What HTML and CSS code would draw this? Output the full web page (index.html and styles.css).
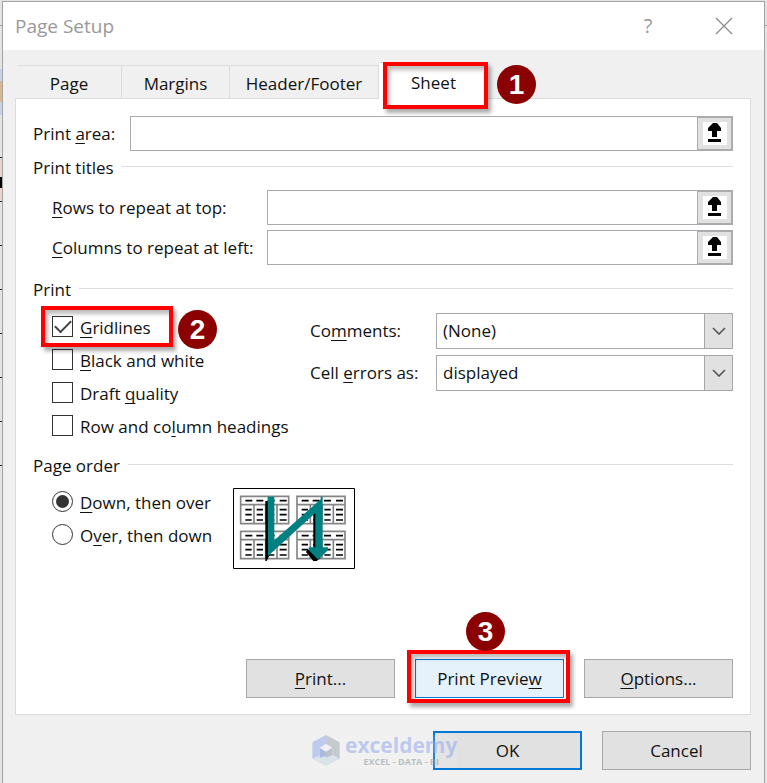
FILE: index.html
```html
<!DOCTYPE html>
<html lang="en">
<head>
<meta charset="utf-8">
<meta name="viewport" content="width=device-width, initial-scale=1">
<title>Page Setup</title>
<link rel="stylesheet" href="styles.css">
</head>
<body>
<svg class="defs" aria-hidden="true">
  <symbol id="collapse" viewBox="0 0 24 23">
    <path fill="#fff" d="M0 0h24v23H0z"/>
    <path d="M10 1h4l4 5v3h-4v6h-5V9H5V6zM5 17h13v3H5z"/>
  </symbol>
  <symbol id="chevron" viewBox="0 0 14 8">
    <path d="M1 1l6 6 6-6" fill="none" stroke="#555" stroke-width="1.6"/>
  </symbol>
</svg>
<main class="dialog">
  <header class="titlebar">
    <h1>Page Setup</h1>
    <button class="icon-button" type="button" aria-label="Help">?</button>
    <button class="icon-button" type="button" aria-label="Close">
      <svg width="18" height="18" viewBox="0 0 18 18" aria-hidden="true"><path d="M1 1l16 16M17 1L1 17" stroke="#8c8c8c" stroke-width="1.3"/></svg>
    </button>
  </header>

  <nav class="tabs" role="tablist">
    <button class="tab tab-page" type="button" role="tab">Page</button>
    <button class="tab" type="button" role="tab">Margins</button>
    <button class="tab tab-wide" type="button" role="tab">Header/Footer</button>
    <div class="active-wrap">
      <button class="tab tab-active" type="button" role="tab" aria-selected="true">Sheet</button>
      <span class="mark mark-tab"></span>
      <span class="badge badge-tab">1</span>
    </div>
  </nav>

  <form class="panel">
    <div class="field-row area-row">
      <label for="area">Print <u>a</u>rea:</label>
      <div class="ref-field"><input id="area" type="text"><button type="button" aria-label="Select print area"><svg aria-hidden="true"><use href="#collapse"/></svg></button></div>
    </div>

    <fieldset>
      <legend>Print titles</legend>
      <div class="titles">
        <div class="field-row title-row">
          <label for="rows"><u>R</u>ows to repeat at top:</label>
          <div class="ref-field"><input id="rows" type="text"><button type="button" aria-label="Select rows"><svg aria-hidden="true"><use href="#collapse"/></svg></button></div>
        </div>
        <div class="field-row title-row">
          <label for="cols"><u>C</u>olumns to repeat at left:</label>
          <div class="ref-field"><input id="cols" type="text"><button type="button" aria-label="Select columns"><svg aria-hidden="true"><use href="#collapse"/></svg></button></div>
        </div>
      </div>
    </fieldset>

    <fieldset class="print">
      <legend>Print</legend>
      <div class="print-body">
        <div class="choices">
          <div class="choice marked">
            <input id="grid" type="checkbox" checked><label for="grid"><u>G</u>ridlines</label>
            <span class="mark mark-grid"></span>
            <span class="badge badge-grid">2</span>
          </div>
          <div class="choice"><input id="bw" type="checkbox"><label for="bw"><u>B</u>lack and white</label></div>
          <div class="choice"><input id="draft" type="checkbox"><label for="draft">Draft <u>q</u>uality</label></div>
          <div class="choice"><input id="heads" type="checkbox"><label for="heads">Row and co<u>l</u>umn headings</label></div>
        </div>
        <div class="selects">
          <label for="comments">Co<u>m</u>ments:</label>
          <div class="select"><select id="comments"><option>(None)</option></select><span class="arrow"><svg width="14" height="8" aria-hidden="true"><use href="#chevron"/></svg></span></div>
          <label for="errors">Cell <u>e</u>rrors as:</label>
          <div class="select"><select id="errors"><option>displayed</option></select><span class="arrow"><svg width="14" height="8" aria-hidden="true"><use href="#chevron"/></svg></span></div>
        </div>
      </div>
    </fieldset>

    <fieldset class="order">
      <legend>Page order</legend>
      <div class="order-body">
        <div class="choices">
          <div class="choice"><input id="down" name="order" type="radio" checked><label for="down"><u>D</u>own, then over</label></div>
          <div class="choice"><input id="over" name="order" type="radio"><label for="over">O<u>v</u>er, then down</label></div>
        </div>
        <svg class="preview" width="122" height="81" viewBox="22 24 366 243" aria-hidden="true">
          <defs>
            <g id="sheet">
              <path d="M2 2h144v82H2zM2 27h144M42 27v57M77 27v57M111 27v57" fill="#fff" stroke="#858585" stroke-width="5"/>
              <path d="M16 15h21M49 15h21M83 15h21M119 15h21M16 42h19M50 42h19M84 42h19M119 42h21M16 57h19M50 57h19M84 57h19M119 57h21M16 73h19M50 73h19M84 73h19M119 73h21" stroke="#000" stroke-width="5"/>
            </g>
          </defs>
          <path d="M23.500 25.500h363v240h-363z" fill="#fff" stroke="#000" stroke-width="3"/>
          <use href="#sheet" x="43" y="47"/><use href="#sheet" x="212" y="47"/>
          <use href="#sheet" x="43" y="152"/><use href="#sheet" x="212" y="152"/>
          <path d="M119 63h12v164l-8 16h-4zM263 92h12v122l10 20-12 9h-10l-22-27 4-7h10l8 8z"/>
          <path d="M126 50h20v131L285 58V50h6v152h16v8l-14 14-16 15-14-15-14-14v-8h20V99L137 219l-10 10z" fill="#008080"/>
        </svg>
      </div>
    </fieldset>

    <div class="actions">
      <button class="push" type="button"><span><u>P</u>rint...</span></button>
      <div class="marked">
        <button class="push hot" type="button"><span>Print Previe<u>w</u></span></button>
        <span class="mark mark-preview"></span>
        <span class="badge badge-preview">3</span>
      </div>
      <button class="push" type="button"><span><u>O</u>ptions...</span></button>
    </div>
  </form>

  <footer class="footer">
    <div class="marked">
      <button class="push default" type="button">OK</button>
      <div class="brand">
        <svg width="28" height="31" viewBox="0 0 82 93" aria-hidden="true">
          <path fill="#9db1ec" d="M41 0v26L22 38v24L0 72V22z"/>
          <path fill="#a9b1ba" d="M41 0l41 22v50L60 60V38L41 26z"/>
          <path fill="#c9dde5" d="M0 72l22-10 19-10 19 8 22 12-41 21z"/>
          <path fill="#8099d8" d="M22 38l19 12v14L22 68z"/>
          <path fill="#9aa5b0" d="M41 50l19-12v22l-19 8z"/>
        </svg>
        <div><strong>exceldemy</strong><small>EXCEL - DATA - BI</small></div>
      </div>
    </div>
    <button class="push" type="button">Cancel</button>
  </footer>
</main>
</body>
</html>
```
FILE: styles.css
```css
* { box-sizing: border-box; }

body {
  margin: 0;
  padding: 1px 2px 0;
  color: #111;
  font: 17px/24px "Open Sans", "Noto Sans", sans-serif;
  background:
    linear-gradient(#000, #000) 0 177px / 2px 11px no-repeat,
    linear-gradient(#e8d5c9, #e8d5c9) 0 158px / 2px 42px no-repeat,
    linear-gradient(#d9b78f, #d9b78f) 0 81px / 2px 21px no-repeat,
    linear-gradient(#c5d4e6, #c5d4e6) 0 69px / 2px 46px no-repeat,
    linear-gradient(#999, #999) 0 25px / 100% 1px no-repeat,
    repeating-linear-gradient(#222 0 1px, transparent 1px 44px) 0 157px / 2px 309px no-repeat,
    #e4e4e4;
}

button, input, select { font: inherit; color: inherit; margin: 0; }
button { padding: 0; }
u { text-underline-offset: 3px; text-decoration-thickness: 1px; text-decoration-skip-ink: none; }

.defs { position: absolute; width: 0; height: 0; }

.dialog {
  min-height: calc(100vh - 1px);
  border: 1px solid #a3a3a3;
  border-bottom: 0;
  background: #f0f0f0;
}

.titlebar {
  display: flex;
  align-items: center;
  height: 48px;
  padding: 0 16px 0 12px;
  background: #fff;
  color: #999;
}
.titlebar h1 { flex: 1; margin: 0; font-size: 19px; font-weight: 400; }
.icon-button {
  display: grid;
  place-items: center;
  width: 48px;
  height: 32px;
  margin-left: 28px;
  border: 0;
  background: none;
  font-size: 20px;
}

.tabs { display: flex; align-items: flex-end; height: 48px; padding-left: 14px; }
.tab {
  width: 108px;
  height: 33px;
  padding-top: 4px;
  border: 1px solid #dcdcdc;
  border-width: 1px 1px 0 0;
  background: #f0f0f0;
}
.tab-page { width: 105px; }
.tab-wide { width: 149px; }
.active-wrap { position: relative; margin-bottom: -1px; }
.tab-active {
  width: 109px;
  height: 37px;
  padding: 4px 0 0;
  border-right: 0;
  background: #fff;
}

.mark {
  position: absolute;
  border: 4px solid #f00;
  box-shadow: 3px 4px 4px #0005, inset 3px 4px 4px #0004;
  pointer-events: none;
}
.mark-tab { left: 4px; top: 0; width: 105px; height: 47px; }
.mark-grid { left: -11px; top: -4px; width: 132px; height: 41px; }
.mark-preview { left: -8px; top: -9px; width: 163px; height: 53px; }

.badge {
  position: absolute;
  display: grid;
  place-items: center;
  width: 39px;
  height: 39px;
  border-radius: 50%;
  background: #8b0000;
  color: #fff;
  font: bold 28px/36px "Liberation Sans", sans-serif;
}
.badge-tab { left: 118px; top: 3px; }
.badge-grid { left: 126px; top: 0; }
.badge-preview { left: 51px; top: -47px; }

.panel {
  margin: 0 13px 0 12px;
  padding: 17px 17px 16px;
  border: 1px solid #dcdcdc;
  background: #fff;
}

.field-row { display: flex; align-items: center; height: 35px; }
.area-row label { width: 97px; }
.title-row label { width: 215px; }
.ref-field {
  display: flex;
  flex: 1;
  align-self: stretch;
  border: 1px solid #a9a9ae;
}
.ref-field input { flex: 1; min-width: 0; border: 0; padding: 0 6px; background: #fff; }
.ref-field button {
  display: grid;
  place-items: center;
  width: 35px;
  border: 1px solid #acacac;
  background: #e1e1e1;
}
.ref-field svg { width: 24px; height: 23px; }

fieldset { min-width: 0; margin: 5px 0 0; padding: 0; border: 0; }
legend { display: flex; align-items: center; gap: 8px; width: 100%; padding: 0; }
legend::after { content: ""; flex: 1; height: 1px; margin-bottom: 4px; background: #dcdcdc; }

.titles { display: grid; gap: 5px; padding: 10px 0 0 19px; }
.print { margin-top: 13px; }
.order { margin-top: 12px; }
.print-body { display: flex; padding: 8px 0 0 19px; }
.print-body .choices { width: 258px; }
.order-body { display: flex; align-items: flex-start; padding: 7px 0 0 19px; }
.order-body .choices { width: 181px; }
.preview { margin-top: 3px; }

.choice { display: flex; align-items: center; gap: 7px; height: 33px; white-space: nowrap; }
.choice label { padding-top: 3px; }
.choice input {
  display: grid;
  place-items: center;
  width: 21px;
  height: 21px;
  appearance: none;
  border: 1px solid #333;
  background: #fff;
}
.choice input[type="radio"] { border-radius: 50%; }
.choice input[type="radio"]:checked::after {
  content: "";
  width: 13px;
  height: 13px;
  border-radius: 50%;
  background: #333;
}
.choice input[type="checkbox"]:checked::after {
  content: "";
  width: 14px;
  height: 7px;
  margin-bottom: 5px;
  border: solid #444;
  border-width: 0 0 2px 2px;
  transform: rotate(-45deg);
}
.marked { position: relative; }

.selects {
  display: grid;
  grid-template-columns: 126px 1fr;
  gap: 6px 0;
  flex: 1;
  align-content: start;
  align-items: center;
  padding-top: 3px;
}
.select { position: relative; height: 36px; }
.select select {
  width: 100%;
  height: 100%;
  padding: 0 36px 0 6px;
  appearance: none;
  border: 1px solid #a9a9ae;
  border-radius: 0;
  background: #fff;
}
.arrow {
  position: absolute;
  top: 0;
  right: 0;
  bottom: 0;
  display: grid;
  place-items: center;
  width: 29px;
  border: 1px solid #a6a6a6;
  background: #e1e1e1;
  pointer-events: none;
}

.actions { display: flex; justify-content: flex-end; gap: 20px; margin-top: 90px; }
.push {
  display: block;
  width: 149px;
  height: 39px;
  border: 1px solid #a8a8a8;
  background: #e1e1e1;
}
.push.hot { border-color: #0078d7; background: #e5f1fb; }
.push.default { border: 2px solid #0078d7; }

.footer { display: flex; justify-content: flex-end; gap: 20px; padding: 16px 13px 12px; }

.brand {
  position: absolute;
  left: -121px;
  top: 4px;
  display: flex;
  gap: 5px;
  background: #fff3;
  opacity: 0.6;
  pointer-events: none;
}
.brand div { display: grid; }
.brand strong { color: #9db1ec; font-size: 21px; line-height: 21px; }
.brand small { color: #98a0aa; font-size: 9px; font-weight: 700; line-height: 12px; text-align: center; }
```
